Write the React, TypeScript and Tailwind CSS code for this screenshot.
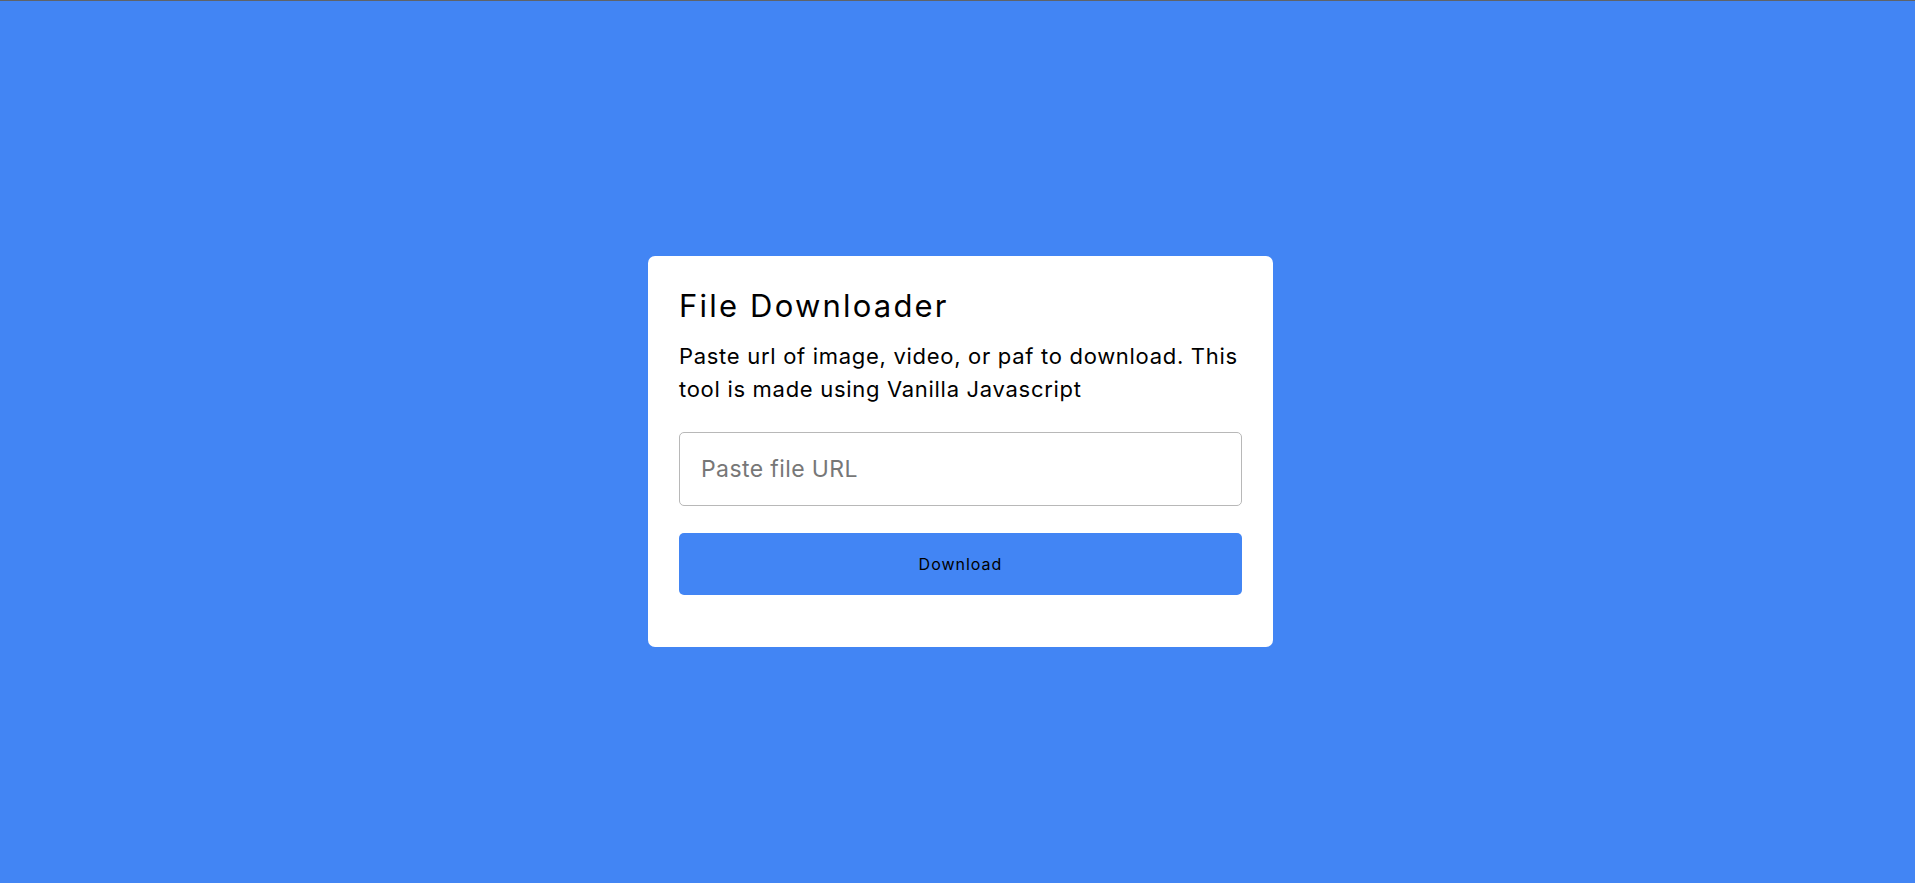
import React from "react";

export default function App() {
  return (
    <div
      className="min-h-screen w-full bg-[#4285f4] border-t border-[#5f6368] flex items-center justify-center pt-[19px] pl-[6px]"
      style={{ fontFamily: "Inter, 'Noto Sans', sans-serif" }}
    >
      <div className="w-[625px] bg-white rounded-[7px] px-[31px] pt-[26px] pb-[52px]">
        <h1 className="text-[31px] leading-[48px] tracking-[2.2px] text-black font-normal">File Downloader</h1>
        <p className="mt-[10px] text-[22px] leading-[33px] tracking-[0.7px] text-black">
          Paste url of image, video, or paf to download. This tool is made using Vanilla Javascript
        </p>
        <input
          type="text"
          placeholder="Paste file URL"
          className="mt-[26px] block w-full h-[74px] border border-[#b8b8b8] rounded-[5px] px-[21px] text-[23px] tracking-[0.4px] text-black placeholder:text-[#777777] outline-none"
        />
        <button className="mt-[27px] block w-full h-[62px] bg-[#4285f4] rounded-[5px] text-[16px] tracking-[1px] text-black">
          Download
        </button>
      </div>
    </div>
  );
}
